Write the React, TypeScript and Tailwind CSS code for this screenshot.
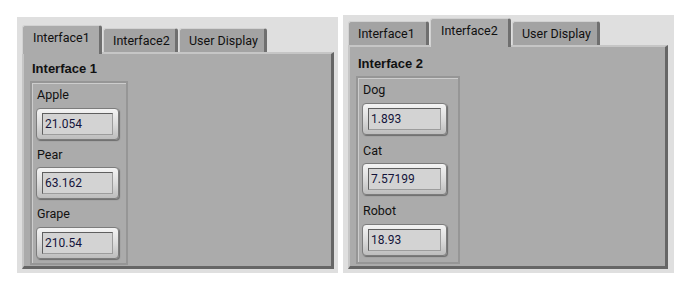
import React from "react";

type Item = { label: string; value: string };

type Variant = {
  title: string;
  active: number;
  items: Item[];
  wrap: string;
  row: string;
  tabs: string[];
  body: string;
  head: string;
  cluster: string;
  box: string;
  gap: string;
};

const LABELS = ["Interface1", "Interface2", "User Display"];

const PANELS: Variant[] = [
  {
    title: "Interface 1",
    active: 0,
    items: [
      { label: "Apple", value: "21.054" },
      { label: "Pear", value: "63.162" },
      { label: "Grape", value: "210.54" },
    ],
    wrap: "ml-[17px] mt-[17px] pr-[4px]",
    row: "h-[35px]",
    tabs: ["w-[80px]", "w-[75px]", "w-[88px]"],
    body: "w-[312px] h-[217px]",
    head: "pt-[8px]",
    cluster: "w-[98px] h-[184px]",
    box: "w-[83px]",
    gap: "gap-[9px]",
  },
  {
    title: "Interface 2",
    active: 1,
    items: [
      { label: "Dog", value: "1.893" },
      { label: "Cat", value: "7.57199" },
      { label: "Robot", value: "18.93" },
    ],
    wrap: "ml-[5px] mt-[15px] pr-[6px]",
    row: "h-[30px]",
    tabs: ["w-[81px]", "w-[81px]", "w-[88px]"],
    body: "w-[320px] h-[224px]",
    head: "pt-[10px]",
    cluster: "w-[104px] h-[188px]",
    box: "w-[85px]",
    gap: "gap-[10px]",
  },
];

function Tab({ label, active, size }: { label: string; active: boolean; size: string }) {
  return (
    <div
      className={`${size} whitespace-nowrap rounded-t-[3px] border-l border-t border-l-[#d2d2d2] border-t-[#d2d2d2] border-r-[3px] border-r-[#6f6f6f] font-['Roboto','Noto_Sans',sans-serif] text-[12.5px] text-[#101010] leading-none ${
        active
          ? "h-[29px] bg-[#ababab] pt-[6px] pl-[10px] -mb-[2px] relative z-10"
          : "h-[24px] bg-[#a3a3a3] pt-[6px] pl-[9px]"
      }`}
    >
      {label}
    </div>
  );
}

function Numeric({ value, size }: { value: string; size: string }) {
  return (
    <div
      className={`${size} h-[32px] rounded-[4px] border border-[#7c7c7c] bg-gradient-to-b from-[#f4f4f4] via-[#dcdcdc] to-[#bdbdbd] px-[5px] py-[4px] shadow-[1px_1px_1px_#6c6c6c]`}
    >
      <div className="h-[22px] bg-[#d3d3d3] border border-[#5f5f5f] border-r-[#9c9c9c] border-b-[#9c9c9c] flex items-center pl-[2px] font-['Roboto','Noto_Sans',sans-serif] text-[12px] text-[#14143a]">
        {value}
      </div>
    </div>
  );
}

function Panel({ v }: { v: Variant }) {
  return (
    <div className={`${v.wrap} bg-[#dfdfdf] pl-[5px] pb-[4px]`}>
      <div className={`${v.row} flex items-end gap-[1px]`}>
        {LABELS.map((l, i) => (
          <Tab key={l} label={l} active={i === v.active} size={v.tabs[i]} />
        ))}
      </div>
      <div
        className={`${v.body} bg-[#ababab] border-l-2 border-t-2 border-l-[#c6c6c6] border-t-[#c6c6c6] border-r-[3px] border-b-[3px] border-r-[#666] border-b-[#666] pl-[6px]`}
      >
        <div className={`${v.head} font-['Liberation_Sans',Arial,sans-serif] text-[13px] font-bold text-[#111] leading-none pl-[2px]`}>
          {v.title}
        </div>
        <div
          className={`${v.cluster} ${v.gap} mt-[6px] border-2 border-[#969696] shadow-[inset_1px_1px_0_#cdcdcd] pl-[4px] pt-[6px] flex flex-col`}
        >
          {v.items.map((it) => (
            <div key={it.label}>
              <div className="font-['Roboto','Noto_Sans',sans-serif] text-[12.5px] text-[#111] leading-none mb-[6px] pl-[1px]">
                {it.label}
              </div>
              <Numeric value={it.value} size={v.box} />
            </div>
          ))}
        </div>
      </div>
    </div>
  );
}

export default function App() {
  return (
    <div className="w-[693px] h-[285px] bg-white flex items-start">
      {PANELS.map((v) => (
        <Panel key={v.title} v={v} />
      ))}
    </div>
  );
}
